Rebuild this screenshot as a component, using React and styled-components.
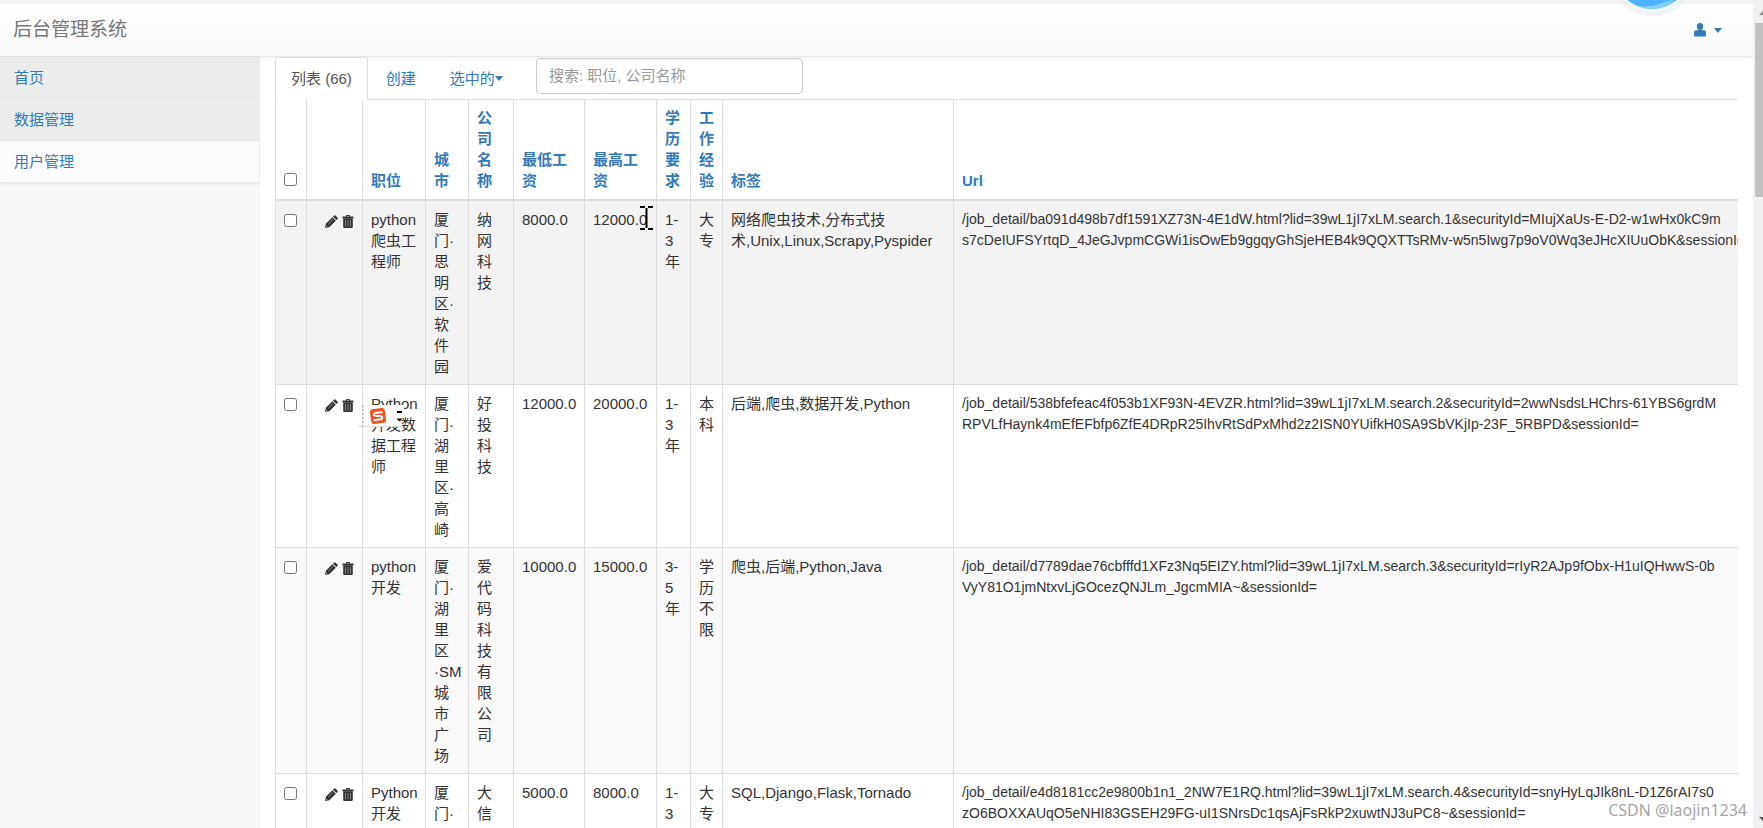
import React from "react";
import styled, { createGlobalStyle } from "styled-components";

const GlobalStyle = createGlobalStyle`
  *, *::before, *::after { box-sizing: border-box; }
  body {
    margin: 0;
    background: #fff;
    color: #333;
    font-family: "Liberation Sans", "Noto Sans CJK SC", sans-serif;
    font-size: 15px;
    line-height: 21px;
  }
  a { color: #337ab7; text-decoration: none; }
`;

const Window = styled.div`
  display: flex;
  height: 100vh;
  overflow: hidden;
  position: relative;
`;

const Page = styled.div`
  flex: 1;
  min-width: 0;
  display: flex;
  flex-direction: column;
  border-top: 4px solid #f2f4f6;
`;

const Navbar = styled.header`
  flex: none;
  height: 53px;
  display: flex;
  align-items: center;
  justify-content: space-between;
  padding: 0 31px 0 13px;
  background: linear-gradient(#fff, #f8f8f8);
  border-bottom: 1px solid #e7e7e7;
  box-shadow: 0 1px 4px rgba(0, 0, 0, 0.07);
`;

const Brand = styled.a`
  color: #777;
  font-size: 19px;
  line-height: 24px;
`;

const UserButton = styled.button`
  display: flex;
  align-items: center;
  gap: 8px;
  padding: 0;
  border: 0;
  background: none;
  color: #337ab7;
`;

const Body = styled.div`
  flex: 1;
  min-height: 0;
  display: flex;
`;

const Sidebar = styled.nav`
  flex: none;
  width: 260px;
  background: #f8f8f8;
  border-right: 1px solid #f3f3f3;
`;

const Menu = styled.ul`
  list-style: none;
  margin: 0;
  padding: 0;
  box-shadow: 0 1px 3px rgba(0, 0, 0, 0.08);
`;

const MenuLink = styled.a`
  display: block;
  height: 42px;
  padding: 10px 14px;
  background: ${(p) => (p.$shaded ? "#ececec" : "#fbfbfb")};
  border-bottom: 1px solid #e7e7e7;
`;

const Main = styled.main`
  flex: 1;
  min-width: 0;
  padding: 0 15px;
`;

const Tabs = styled.div`
  display: flex;
  gap: 2px;
  height: 43px;
  border-bottom: 1px solid #ddd;
`;

const Tab = styled.a`
  display: flex;
  align-items: center;
  height: 43px;
  padding: 0 15px;
  border: 1px solid transparent;
  border-radius: 4px 4px 0 0;
  ${(p) => p.$active && "color: #555; background: #fff; border-color: #ddd #ddd #fff;"}
`;

const SearchForm = styled.form`
  padding: 1px 0 0 15px;
`;

const SearchInput = styled.input`
  display: block;
  width: 267px;
  height: 36px;
  padding: 5px 12px 7px;
  border: 1px solid #ccc;
  border-radius: 4px;
  box-shadow: inset 0 1px 1px rgba(0, 0, 0, 0.07);
  font: inherit;
  &::placeholder { color: #999; opacity: 1; }
`;

const TableClip = styled.div`
  overflow: hidden;
`;

const Table = styled.table`
  width: 1600px;
  table-layout: fixed;
  border-collapse: separate;
  border-spacing: 0;
`;

const Col = styled.col`
  width: ${(p) => p.$width}px;
`;

const Row = styled.tr`
  background: ${(p) => p.$fill};
`;

const HeadCell = styled.th`
  padding: 7px 8px 8px;
  border-left: 1px solid #ddd;
  border-bottom: 2px solid #ddd;
  vertical-align: bottom;
  text-align: left;
  color: #337ab7;
  white-space: pre;
`;

const Cell = styled.td`
  padding: 8px 8px 7px;
  border-left: 1px solid #ddd;
  border-bottom: 1px solid #ddd;
  vertical-align: top;
  white-space: pre;
  &:last-child { font-size: 14px; }
`;

const Check = styled.input`
  display: block;
  width: 13px;
  height: 13px;
  margin: 5px 0;
`;

const Actions = styled.div`
  display: flex;
  justify-content: flex-end;
  gap: 4px;
  padding-top: 6px;
`;

const IconButton = styled.button`
  display: block;
  padding: 0;
  border: 0;
  background: none;
  color: #333;
  line-height: 0;
`;

const Scrollbar = styled.div`
  flex: none;
  width: 10px;
  background: #f1f1f1;
  padding: 23px 0 0 2px;
  position: relative;
`;

const Thumb = styled.div`
  height: 174px;
  background: #c1c1c1;
`;

const ScrollArrow = styled.svg`
  position: absolute;
  right: 0;
  ${(p) => (p.$end ? "bottom: 7px;" : "top: 11px;")}
`;

const Bubble = styled.svg`
  position: absolute;
  top: 0;
  right: 66px;
`;

const Pointer = styled.svg`
  position: absolute;
  left: 640px;
  top: 206px;
`;

const InputMethodBar = styled.svg`
  position: absolute;
  left: 358px;
  top: 404px;
`;

const Watermark = styled.div`
  position: absolute;
  right: 16px;
  bottom: 6px;
  color: rgba(140, 140, 140, 0.8);
  font: 16px/24px "Noto Sans", sans-serif;
`;

const Caret = () => (
  <svg width="8" height="5" viewBox="0 0 8 5" aria-hidden="true">
    <path d="M0 0h8L4 5z" fill="currentColor" />
  </svg>
);

const UserIcon = () => (
  <svg width="12" height="14" viewBox="0 0 12 14" aria-hidden="true">
    <path
      d="M6 0C8 0 9.200 1.400 9.200 3.400 9.200 4.900 8.500 6 7.600 6.600V6.900L10.600 7.400C11.600 7.800 12 8.500 12 9.500V12.500Q12 13.500 11 13.500H1Q0 13.500 0 12.500V9.500C0 8.500.4 7.800 1.400 7.400L4.400 6.900V6.600C3.500 6 2.800 4.900 2.800 3.400 2.800 1.400 4 0 6 0z"
      fill="currentColor"
    />
  </svg>
);

const PencilIcon = () => (
  <svg width="13" height="13" viewBox="0 0 13 13" aria-hidden="true">
    <path d="M9 .7Q9.800-.1 10.600.7L12.400 2.500Q13.200 3.300 12.400 4.100L11.400 5.100 8 1.700z" fill="currentColor" />
    <path d="M7.400 2.300L10.800 5.700 4.300 12.200 0 13 .9 8.800z" fill="currentColor" />
    <path d="M3.200 9.200L8 4.400" stroke="#aaa" strokeWidth="0.700" />
    <path d="M1 11.200L1.900 12" stroke="#eee" strokeWidth="0.900" />
  </svg>
);

const TrashIcon = () => (
  <svg width="12" height="13" viewBox="0 0 12 13" aria-hidden="true">
    <path
      d="M4 1.500V.9Q4 0 4.900 0H7.100Q8 0 8 .9V1.500H11Q11.600 1.500 11.600 2.100V3.300H.4V2.100Q.4 1.500 1 1.500zM5 1.500H7V1H5z"
      fill="currentColor"
      fillRule="evenodd"
    />
    <path d="M1.200 3.300H10.800V11.700Q10.800 13 9.500 13H2.500Q1.200 13 1.200 11.700z" fill="currentColor" />
    <path d="M3.500 5V11.500M6 5V11.500M8.500 5V11.500" stroke="#999" strokeWidth="0.800" />
  </svg>
);

const widths = [31, 56, 63, 43, 45, 71, 72, 34, 32, 231, 922];

const headings = ["职位", "城\n市", "公\n司\n名\n称", "最低工\n资", "最高工\n资", "学\n历\n要\n求", "工\n作\n经\n验", "标签", "Url"];

const rows = [
  {
    fill: "#f3f3f3",
    cells: [
      "python\n爬虫工\n程师",
      "厦\n门·\n思\n明\n区·\n软\n件\n园",
      "纳\n网\n科\n技",
      "8000.0",
      "12000.0",
      "1-\n3\n年",
      "大\n专",
      "网络爬虫技术,分布式技\n术,Unix,Linux,Scrapy,Pyspider",
      "/job_detail/ba091d498b7df1591XZ73N-4E1dW.html?lid=39wL1jI7xLM.search.1&securityId=MIujXaUs-E-D2-w1wHx0kC9m\ns7cDeIUFSYrtqD_4JeGJvpmCGWi1isOwEb9ggqyGhSjeHEB4k9QQXTTsRMv-w5n5Iwg7p9oV0Wq3eJHcXIUuObK&sessionId=",
    ],
  },
  {
    fill: "#fff",
    cells: [
      "Python\n开发数\n据工程\n师",
      "厦\n门·\n湖\n里\n区·\n高\n崎",
      "好\n投\n科\n技",
      "12000.0",
      "20000.0",
      "1-\n3\n年",
      "本\n科",
      "后端,爬虫,数据开发,Python",
      "/job_detail/538bfefeac4f053b1XF93N-4EVZR.html?lid=39wL1jI7xLM.search.2&securityId=2wwNsdsLHChrs-61YBS6grdM\nRPVLfHaynk4mEfEFbfp6ZfE4DRpR25IhvRtSdPxMhd2z2ISN0YUifkH0SA9SbVKjIp-23F_5RBPD&sessionId=",
    ],
  },
  {
    fill: "#f9f9f9",
    cells: [
      "python\n开发",
      "厦\n门·\n湖\n里\n区\n·SM\n城\n市\n广\n场",
      "爱\n代\n码\n科\n技\n有\n限\n公\n司",
      "10000.0",
      "15000.0",
      "3-\n5\n年",
      "学\n历\n不\n限",
      "爬虫,后端,Python,Java",
      "/job_detail/d7789dae76cbfffd1XFz3Nq5EIZY.html?lid=39wL1jI7xLM.search.3&securityId=rIyR2AJp9fObx-H1uIQHwwS-0b\nVyY81O1jmNtxvLjGOcezQNJLm_JgcmMIA~&sessionId=",
    ],
  },
  {
    fill: "#fff",
    cells: [
      "Python\n开发",
      "厦\n门·",
      "大\n信",
      "5000.0",
      "8000.0",
      "1-\n3",
      "大\n专",
      "SQL,Django,Flask,Tornado",
      "/job_detail/e4d8181cc2e9800b1n1_2NW7E1RQ.html?lid=39wL1jI7xLM.search.4&securityId=snyHyLqJIk8nL-D1Z6rAI7s0\nzO6BOXXAUqO5eNHI83GSEH29FG-uI1SNrsDc1qsAjFsRkP2xuwtNJ3uPC8~&sessionId=",
    ],
  },
];

export default function App() {
  return (
    <Window>
      <GlobalStyle />
      <Page>
        <Navbar>
          <Brand href="#home">后台管理系统</Brand>
          <UserButton type="button" aria-label="用户">
            <UserIcon />
            <Caret />
          </UserButton>
        </Navbar>
        <Body>
          <Sidebar>
            <Menu>
              <li><MenuLink href="#home" $shaded>首页</MenuLink></li>
              <li><MenuLink href="#data" $shaded>数据管理</MenuLink></li>
              <li><MenuLink href="#users">用户管理</MenuLink></li>
            </Menu>
          </Sidebar>
          <Main>
            <Tabs>
              <Tab href="#list" $active>列表 (66)</Tab>
              <Tab href="#create">创建</Tab>
              <Tab href="#selected">选中的<Caret /></Tab>
              <SearchForm>
                <SearchInput type="text" aria-label="搜索" placeholder="搜索: 职位, 公司名称" />
              </SearchForm>
            </Tabs>
            <TableClip>
              <Table>
                <colgroup>
                  {widths.map((w, i) => <Col key={i} $width={w} />)}
                </colgroup>
                <thead>
                  <tr>
                    <HeadCell><Check type="checkbox" aria-label="全选" /></HeadCell>
                    <HeadCell />
                    {headings.map((h) => (
                      <HeadCell key={h} scope="col"><a href="#sort">{h}</a></HeadCell>
                    ))}
                  </tr>
                </thead>
                <tbody>
                  {rows.map((row, i) => (
                    <Row key={i} $fill={row.fill}>
                      <Cell><Check type="checkbox" aria-label="选择" /></Cell>
                      <Cell>
                        <Actions>
                          <IconButton type="button" aria-label="编辑"><PencilIcon /></IconButton>
                          <IconButton type="button" aria-label="删除"><TrashIcon /></IconButton>
                        </Actions>
                      </Cell>
                      {row.cells.map((c, j) => <Cell key={j}>{c}</Cell>)}
                    </Row>
                  ))}
                </tbody>
              </Table>
            </TableClip>
          </Main>
        </Body>
      </Page>
      <Scrollbar>
        <Thumb />
        <ScrollArrow width="4" height="4" viewBox="0 0 4 4"><path d="M0 4L4 0V4z" fill="#888" /></ScrollArrow>
        <ScrollArrow $end width="4" height="4" viewBox="0 0 4 4"><path d="M0 0H4V4z" fill="#505050" /></ScrollArrow>
      </Scrollbar>
      <Bubble width="90" height="18" viewBox="0 0 90 18" aria-hidden="true">
        <circle cx="45" cy="-29" r="45" fill="#dfe3e8" opacity="0.400" />
        <circle cx="45" cy="-30" r="42" fill="#eef7fd" />
        <circle cx="45" cy="-29" r="38" fill="#4fb0fb" />
        <path d="M31 6Q44 7 52 4 59 1 66 0V2Q58 9 45 9 36 9 31 6z" fill="#7fd0fd" />
      </Bubble>
      <InputMethodBar width="48" height="23" viewBox="0 0 48 23" aria-hidden="true">
        <path d="M6 1H46V14H43V22H6z" fill="#fff" />
        <path d="M5 1V22" stroke="#999" strokeDasharray="2 2" />
        <path d="M0 22.500H45" stroke="#ddd" />
        <rect x="12.500" y="4.500" width="15" height="15" rx="3" fill="#f4511e" transform="rotate(-8 20 12)" />
        <path d="M24.500 8L18.500 8.800Q15.300 9.500 15.800 11.200 16.300 12.300 20 12 24 11.600 24.200 13.200 24.300 15.300 21 15.600L15.500 16.300" fill="none" stroke="#fff" strokeWidth="2" />
        <path d="M39 7H44V9H39zM38.500 14.500H44.500L41.500 17.500z" fill="#000" />
      </InputMethodBar>
      <Pointer width="13" height="24" viewBox="0 0 13 24" aria-hidden="true">
        <path d="M0 1H5M8 1H13M6.500 2V22M0 23H5M8 23H13" stroke="#000" strokeWidth="2" />
      </Pointer>
      <Watermark>CSDN @laojin1234</Watermark>
    </Window>
  );
}
